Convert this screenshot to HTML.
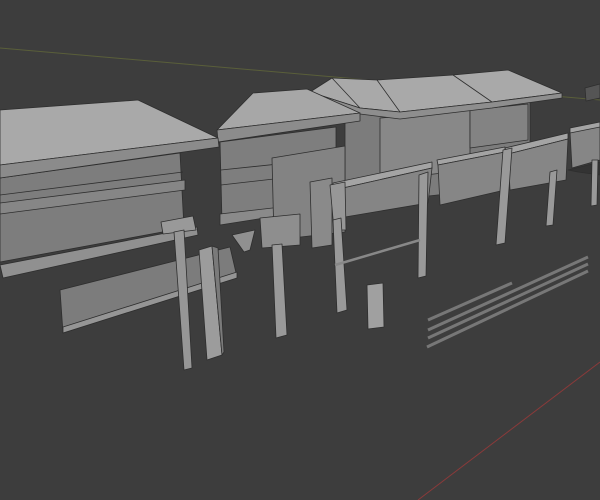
<!DOCTYPE html>
<html><head><meta charset="utf-8"><style>
html,body{margin:0;padding:0;background:#3d3d3d;width:600px;height:500px;overflow:hidden}
svg{display:block}
</style></head><body>
<svg width="600" height="500" viewBox="0 0 600 500" stroke="#2e2e2e" stroke-width="0.8" stroke-linejoin="round">
<rect width="600" height="500" fill="#3d3d3d" stroke="none"/>
<line x1="0" y1="48" x2="600" y2="100" stroke="#5a5f3a" stroke-width="1"/>
<line x1="418" y1="500" x2="600" y2="362" stroke="#8a3a3a" stroke-width="1"/>

<!-- right large building -->
<polygon points="345,110 530,100 530,185 345,205" fill="#7c7c7c"/>
<polygon points="380,118 470,110 470,170 380,180" fill="#888"/>
<polygon points="470,110 528,104 528,140 470,148" fill="#838383"/>
<polygon points="310,92 332,78 377,80 453,75 508,70 562,93 492,102 400,112 360,108" fill="#a9a9a9"/>
<polygon points="310,92 360,108 400,112 492,102 562,93 562,98 492,108 400,119 360,114 310,97" fill="#8e8e8e"/>
<line x1="377" y1="80" x2="400" y2="112"/><line x1="453" y1="75" x2="492" y2="102"/>
<line x1="332" y1="78" x2="360" y2="108"/>

<!-- center building -->
<polygon points="220,142 336,127 336,212 222,222" fill="#7e7e7e"/>
<polygon points="217,130 253,93 307,89 360,113" fill="#a7a7a7"/>
<polygon points="217,130 360,113 360,121 218,142" fill="#8c8c8c"/>
<line x1="221" y1="170" x2="336" y2="158"/><line x1="221" y1="185" x2="336" y2="172"/>
<polygon points="220,214 290,206 290,214 220,225" fill="#8a8a8a"/>
<polygon points="272,158 345,146 345,232 274,240" fill="#838383"/>
<polygon points="310,182 332,178 332,245 312,248" fill="#8a8a8a"/>

<!-- left big building -->
<polygon points="0,178 180,153 184,228 0,262" fill="#7d7d7d"/>
<polygon points="0,203 185,180 185,190 0,214" fill="#868686"/>
<line x1="0" y1="195" x2="183" y2="172"/>
<polygon points="0,110 138,100 218,138 0,165" fill="#a9a9a9"/>
<polygon points="0,165 218,138 219,147 0,178" fill="#8b8b8b"/>
<polygon points="0,265 197,227 198,235 3,278" fill="#909090"/>

<!-- lower panel -->
<polygon points="60,290 230,247 237,277 63,333" fill="#7c7c7c"/>
<polygon points="63,327 237,272 237,278 63,333" fill="#959595"/>

<!-- poles left -->
<polygon points="161,222 193,216 196,230 163,234" fill="#999"/>
<polygon points="174,232 184,230 192,368 184,370" fill="#969696"/>
<polygon points="199,250 212,246 222,355 207,360" fill="#9c9c9c"/>
<polygon points="212,246 218,248 224,352 222,355" fill="#7a7a7a"/>
<polygon points="232,235 255,230 250,250 244,252" fill="#909090"/>
<polygon points="260,218 300,214 300,245 262,248" fill="#8e8e8e"/>
<polygon points="272,245 282,244 287,335 276,338" fill="#999"/>

<!-- billboard 1 -->
<polygon points="333,183 432,162 432,168 334,190" fill="#a4a4a4"/>
<polygon points="334,190 432,168 428,203 345,217" fill="#858585"/>
<polygon points="330,185 345,182 346,230 334,230" fill="#979797"/>
<polygon points="333,220 341,218 347,310 337,313" fill="#999"/>
<polygon points="419,175 428,172 426,276 418,278" fill="#999"/>
<line x1="335" y1="265" x2="420" y2="240" stroke="#888" stroke-width="2.5"/>
<!-- billboard 2 -->
<polygon points="437,160 505,147 505,152 438,165" fill="#a4a4a4"/>
<polygon points="438,165 505,152 505,190 440,205" fill="#868686"/>
<!-- billboard 3 -->
<polygon points="505,148 568,133 568,139 508,154" fill="#a4a4a4"/>
<polygon points="508,154 568,139 566,180 510,190" fill="#868686"/>
<polygon points="503,150 512,148 505,243 496,245" fill="#999"/>
<polygon points="550,172 557,170 553,225 546,226" fill="#999"/>
<!-- billboard 4 -->
<polygon points="570,132 600,125 600,160 572,168" fill="#868686"/>
<polygon points="570,128 600,122 600,127 570,133" fill="#a4a4a4"/>
<polygon points="568,170 600,162 600,175 578,172" fill="#333"/>
<polygon points="592,160 598,160 597,205 591,206" fill="#999"/>
<polygon points="585,88 600,84 600,98 586,101" fill="#555"/>

<!-- bollard -->
<polygon points="367,285 383,283 384,327 368,329" fill="#a0a0a0"/>
<!-- fence -->
<g stroke="#777" stroke-width="3" fill="none">
<line x1="428" y1="320" x2="512" y2="283"/>
<line x1="428" y1="330" x2="588" y2="257"/>
<line x1="428" y1="338" x2="588" y2="264"/>
<line x1="427" y1="347" x2="588" y2="271"/>
</g>
</svg>
</body></html>
